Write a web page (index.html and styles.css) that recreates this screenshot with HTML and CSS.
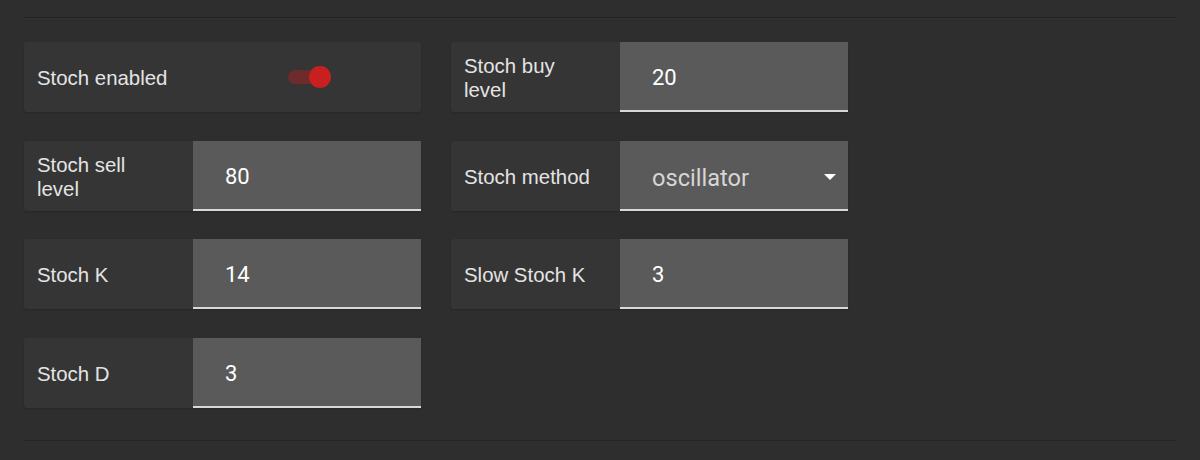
FILE: index.html
```html
<!DOCTYPE html>
<html lang="en">
<head>
    <meta charset="UTF-8">
    <title>Stoch settings</title>
    <link rel="stylesheet" href="styles.css">
</head>
<body>
    <div class="panel">
        <div class="settings">
            <div class="field">
                <div class="label">Stoch enabled</div>
                <div class="control toggle-wrap">
                    <span class="toggle"><span class="thumb"></span></span>
                </div>
            </div>
            <div class="field">
                <div class="label">Stoch buy level</div>
                <div class="control input">20</div>
            </div>

            <div class="field">
                <div class="label">Stoch sell level</div>
                <div class="control input">80</div>
            </div>
            <div class="field">
                <div class="label">Stoch method</div>
                <div class="control input select">
                    <span class="select-value">oscillator</span>
                    <span class="arrow"></span>
                </div>
            </div>

            <div class="field">
                <div class="label">Stoch K</div>
                <div class="control input">14</div>
            </div>
            <div class="field">
                <div class="label">Slow Stoch K</div>
                <div class="control input">3</div>
            </div>

            <div class="field">
                <div class="label">Stoch D</div>
                <div class="control input">3</div>
            </div>
        </div>
    </div>
</body>
</html>
```

FILE: styles.css
```css
body {
    margin: 0;
    background: #2e2e2e;
    font-family: "Liberation Sans", Arial, sans-serif;
    color: #e6e6e6;
}
.panel {
    margin: 17px 24px 0;
    padding: 24px 0 32px;
    border-top: 1px solid #222222;
    border-bottom: 1px solid #262626;
    box-shadow: inset 0 1px 0 #333333;
}
.settings {
    display: grid;
    grid-template-columns: 397px 397px;
    column-gap: 30px;
    row-gap: 28.6px;
}
.field {
    display: flex;
    height: 70px;
    background: #353535;
    border-radius: 3px;
    box-shadow: 0 1px 2px rgba(0,0,0,0.15);
}
.label {
    width: 133px;
    padding: 2px 23px 0 13px;
    display: flex;
    align-items: center;
    font-size: 20.4px;
    line-height: 24px;
    color: #e4e4e4;
}
.control {
    flex: 1;
}
.input {
    display: flex;
    align-items: center;
    padding: 3px 0 0 32px;
    background: #5a5a5a;
    border-bottom: 2px solid #d8d8d8;
    font-family: Roboto, sans-serif;
    font-size: 22px;
    color: #ffffff;
}
.select {
    justify-content: space-between;
    padding-right: 12px;
}
.select-value {
    color: #d6d6d6;
    font-size: 23.6px;
    padding-top: 4px;
}
.arrow {
    width: 0;
    height: 0;
    border-left: 6px solid transparent;
    border-right: 6px solid transparent;
    border-top: 6px solid #ffffff;
    margin-top: 2px;
}
.toggle-wrap {
    display: flex;
    align-items: center;
    justify-content: center;
    padding-left: 4px;
}
.toggle {
    position: relative;
    display: block;
    width: 34px;
    height: 14px;
    border-radius: 7px;
    background: #6e2b2c;
    margin-right: 8px;
}
.thumb {
    position: absolute;
    top: -4px;
    right: -9px;
    width: 22px;
    height: 22px;
    border-radius: 50%;
    background: #c8201f;
}
```
